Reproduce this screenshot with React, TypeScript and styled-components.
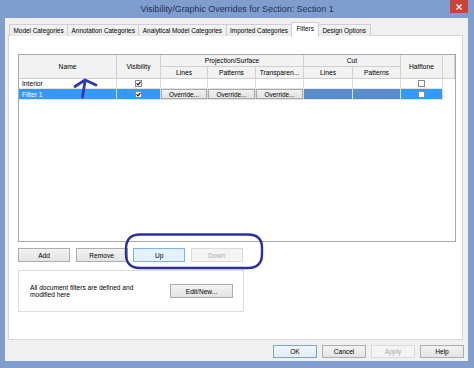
import React from "react";
import styled, { createGlobalStyle, css } from "styled-components";

const Global = createGlobalStyle`
  html, body { margin: 0; padding: 0; background: #7f9dcd; }
  * { box-sizing: border-box; }
`;

const Window = styled.div`
  position: relative;
  width: 474px;
  height: 368px;
  background: #7f9dcd;
  display: flex;
  flex-direction: column;
  overflow: hidden;
  font-family: "Liberation Sans", Arial, sans-serif;
  color: #000;
`;

const TitleBar = styled.div`
  height: 18px;
  display: grid;
  grid-template-columns: 1fr auto 1fr;
  align-items: start;
`;

const Title = styled.div`
  grid-column: 2;
  font-size: 8.9px;
  line-height: 18px;
  color: #22345a;
  white-space: nowrap;
`;

const CloseBtn = styled.div`
  grid-column: 3;
  justify-self: end;
  width: 18px;
  height: 13px;
  margin-right: 6px;
  background: #c7443b;
  display: flex;
  align-items: center;
  justify-content: center;
`;

const Client = styled.div`
  flex: 1;
  margin: 0 6px 7px 5px;
  padding: 4px 4px 3px 3px;
  background: #f0f0f0;
  display: flex;
  flex-direction: column;
`;

const TabStrip = styled.div`
  height: 14px;
  display: flex;
  align-items: flex-end;
  padding-left: 1px;
`;

const Tab = styled.div<{ $active?: boolean }>`
  position: relative;
  z-index: 1;
  height: 12px;
  padding: 0 3.5px;
  font-size: 6.4px;
  line-height: 11px;
  white-space: nowrap;
  background: linear-gradient(#f3f3f3, #ebebeb);
  border: 1px solid #cfcfcf;
  border-bottom: none;
  margin-right: -1px;
  ${(p) =>
    p.$active &&
    css`
      height: 15px;
      margin-bottom: -1px;
      padding: 0 4px;
      background: #ffffff;
      line-height: 12px;
      z-index: 2;
    `}
`;

const Panel = styled.div`
  flex: 1;
  margin-top: -1px;
  margin-right: 1px;
  background: #fff;
  border: 1px solid #d6d6d6;
  padding: 18px 6px 0 9px;
  display: flex;
  flex-direction: column;
`;

const Table = styled.div`
  height: 188px;
  border: 1px solid #a9a9a9;
  background: #fff;
`;

const Grid = styled.div`
  display: grid;
  grid-template-columns: 98px 44px 47px 48px 48px 49px 48px 42px 1fr;
  grid-template-rows: 12px 12px 10px 11px;
  font-size: 6.7px;
`;

const HeadCell = styled.div<{ $col: string; $row: string }>`
  grid-column: ${(p) => p.$col};
  grid-row: ${(p) => p.$row};
  background: #f2f2f2;
  border-right: 1px solid #d0d0d0;
  border-bottom: 1px solid #d0d0d0;
  display: flex;
  align-items: center;
  justify-content: center;
  white-space: nowrap;
  overflow: hidden;
`;

const Cell = styled.div<{ $sel?: boolean; $align?: string; $tone?: string }>`
  border-right: 1px solid ${(p) => (p.$tone === "cut" ? "#d3e1f2" : "#dcdcdc")};
  border-bottom: 1px solid #e3e3e3;
  display: flex;
  align-items: center;
  justify-content: ${(p) => p.$align || "center"};
  padding: ${(p) => (p.$align === "flex-start" ? "0 0 0 3px" : "0")};
  background: ${(p) =>
    p.$tone === "cut" ? "#5a8dcc" : p.$tone === "blank" ? "#fff" : p.$sel ? "#3399ff" : "#fff"};
  color: ${(p) => (p.$sel ? "#fff" : "#000")};
  white-space: nowrap;
  overflow: hidden;
`;

const BlankCell = styled.div`
  background: #fff;
`;

const OverrideBtn = styled.div`
  width: 100%;
  height: 100%;
  background: linear-gradient(#f0f0f0, #e3e3e3);
  border: 1px solid #a9a9a9;
  display: flex;
  align-items: center;
  justify-content: center;
  font-size: 6.4px;
  color: #000;
`;

const Box = styled.div`
  width: 7px;
  height: 7px;
  background: #fff;
  border: 1px solid #8a8a8a;
  display: flex;
  align-items: center;
  justify-content: center;
`;

const ButtonRow = styled.div`
  margin-top: 6px;
  display: flex;
  gap: 5.6px;
`;

const Btn = styled.div<{ $variant?: "hot" | "off" | "default"; $w?: number; $h?: number }>`
  width: ${(p) => p.$w ?? 52}px;
  height: ${(p) => p.$h ?? 14}px;
  border: 1px solid #adadad;
  background: linear-gradient(#f2f2f2, #e4e4e4);
  display: flex;
  align-items: center;
  justify-content: center;
  font-size: 6.6px;
  color: #000;
  white-space: nowrap;
  ${(p) =>
    p.$variant === "hot" &&
    css`
      background: #e5f1fb;
      border-color: #7eb4ea;
    `}
  ${(p) =>
    p.$variant === "default" &&
    css`
      border-color: #78a6d2;
      background: linear-gradient(#f2f6fa, #e6ecf3);
    `}
  ${(p) =>
    p.$variant === "off" &&
    css`
      background: #f4f4f4;
      border-color: #dadada;
      color: #a8a8a8;
    `}
`;

const GroupBox = styled.div`
  margin-top: 8px;
  width: 226px;
  height: 42px;
  border: 1px solid #dcdcdc;
  display: flex;
  align-items: center;
  justify-content: space-between;
  padding: 0 10px 0 11px;
`;

const Note = styled.div`
  font-size: 6.6px;
  line-height: 7.5px;
  color: #000;
`;

const Footer = styled.div`
  margin-top: 5px;
  display: flex;
  justify-content: flex-end;
  gap: 5px;
`;

const Overlay = styled.svg`
  position: absolute;
  left: 0;
  top: 0;
  pointer-events: none;
`;

const Check = () => (
  <svg width="5" height="5" viewBox="0 0 5 5">
    <path d="M0.6 2.4 L2 3.9 L4.5 0.8" fill="none" stroke="#111" strokeWidth="1.2" />
  </svg>
);

export default function App() {
  return (
    <>
      <Global />
      <Window>
        <TitleBar>
          <Title>Visibility/Graphic Overrides for Section: Section 1</Title>
          <CloseBtn>
            <svg width="6" height="6" viewBox="0 0 6 6">
              <path d="M0.5 0.5 L5.5 5.5 M5.5 0.5 L0.5 5.5" stroke="#fff" strokeWidth="1.3" />
            </svg>
          </CloseBtn>
        </TitleBar>
        <Client>
          <TabStrip>
            <Tab>Model Categories</Tab>
            <Tab>Annotation Categories</Tab>
            <Tab>Analytical Model Categories</Tab>
            <Tab>Imported Categories</Tab>
            <Tab $active>Filters</Tab>
            <Tab>Design Options</Tab>
          </TabStrip>
          <Panel>
            <Table>
              <Grid>
                <HeadCell $col="1" $row="1 / span 2">Name</HeadCell>
                <HeadCell $col="2" $row="1 / span 2">Visibility</HeadCell>
                <HeadCell $col="3 / span 3" $row="1">Projection/Surface</HeadCell>
                <HeadCell $col="6 / span 2" $row="1">Cut</HeadCell>
                <HeadCell $col="8" $row="1 / span 2">Halftone</HeadCell>
                <HeadCell $col="9" $row="1 / span 2" />
                <HeadCell $col="3" $row="2">Lines</HeadCell>
                <HeadCell $col="4" $row="2">Patterns</HeadCell>
                <HeadCell $col="5" $row="2">Transparen...</HeadCell>
                <HeadCell $col="6" $row="2">Lines</HeadCell>
                <HeadCell $col="7" $row="2">Patterns</HeadCell>

                <Cell $align="flex-start">Interior</Cell>
                <Cell>
                  <Box>
                    <Check />
                  </Box>
                </Cell>
                <Cell />
                <Cell />
                <Cell />
                <Cell />
                <Cell />
                <Cell>
                  <Box />
                </Cell>
                <BlankCell />

                <Cell $sel $align="flex-start">Filter 1</Cell>
                <Cell $sel>
                  <Box>
                    <Check />
                  </Box>
                </Cell>
                <Cell $tone="blank">
                  <OverrideBtn>Override...</OverrideBtn>
                </Cell>
                <Cell $tone="blank">
                  <OverrideBtn>Override...</OverrideBtn>
                </Cell>
                <Cell $tone="blank">
                  <OverrideBtn>Override...</OverrideBtn>
                </Cell>
                <Cell $tone="cut" />
                <Cell $tone="cut" />
                <Cell $sel>
                  <Box />
                </Cell>
                <BlankCell />
              </Grid>
            </Table>
            <ButtonRow>
              <Btn>Add</Btn>
              <Btn>Remove</Btn>
              <Btn $variant="hot">Up</Btn>
              <Btn $variant="off">Down</Btn>
            </ButtonRow>
            <GroupBox>
              <Note>
                All document filters are defined and
                <br />
                modified here
              </Note>
              <Btn $w={63} $h={14}>Edit/New...</Btn>
            </GroupBox>
          </Panel>
          <Footer>
            <Btn $variant="default" $w={44} $h={13}>OK</Btn>
            <Btn $w={44} $h={13}>Cancel</Btn>
            <Btn $variant="off" $w={44} $h={13}>Apply</Btn>
            <Btn $w={44} $h={13}>Help</Btn>
          </Footer>
        </Client>
        <Overlay width="474" height="368" viewBox="0 0 474 368">
          <path
            d="M140 234.5 L248 234.5 Q262 234.5 262 248 L262 254 Q262 268 248 268 L140 268 Q126 268 126 254 L126 249 Q126 234.5 140 234.5 Z"
            fill="none"
            stroke="#2c2f9e"
            strokeWidth="2.4"
          />
          <path
            d="M82.5 97 L85 81.5 M75 86.5 L85 80 L96 85"
            fill="none"
            stroke="#2d3ab0"
            strokeWidth="2.8"
            strokeLinecap="round"
            strokeLinejoin="round"
          />
        </Overlay>
      </Window>
    </>
  );
}
